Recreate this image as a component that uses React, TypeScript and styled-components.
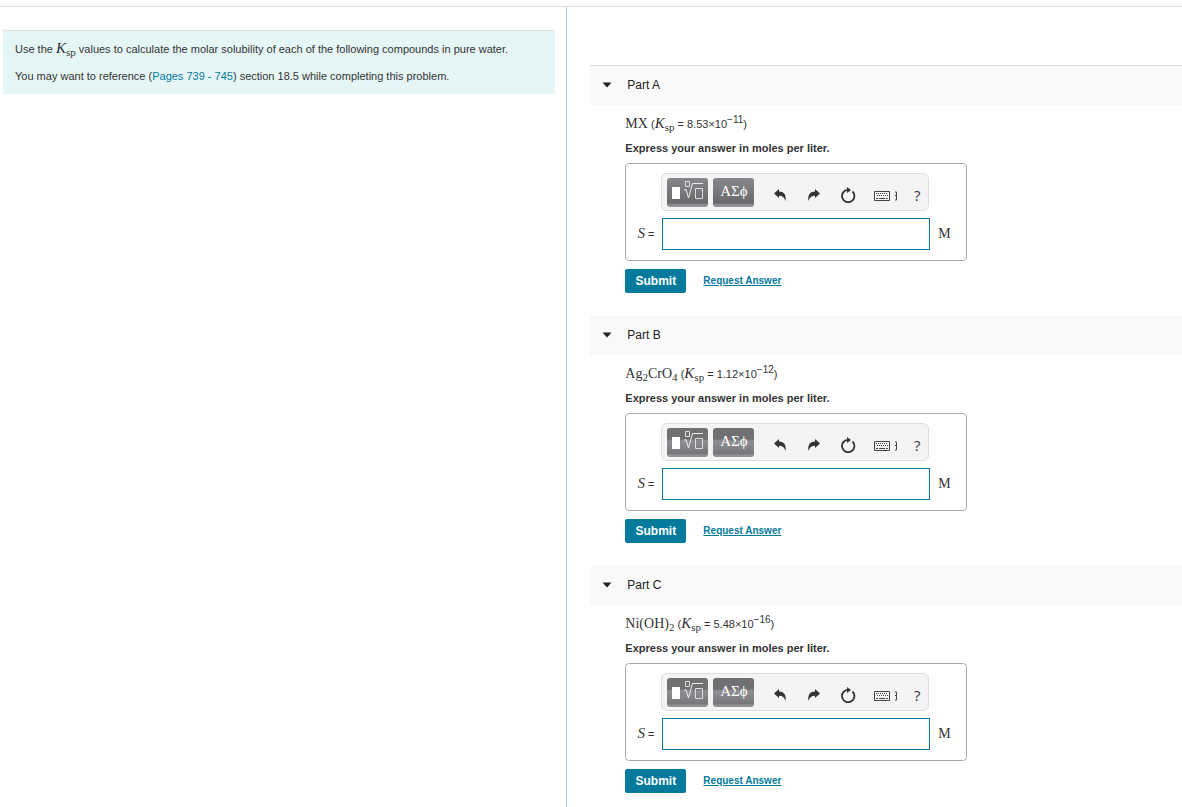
import React, { useState } from "react";
import styled, { createGlobalStyle } from "styled-components";

const Global = createGlobalStyle`
  *, *::before, *::after { box-sizing: border-box; }
  body {
    margin: 0;
    background: #fff;
    color: #333;
    font: 11px/16px "Liberation Sans", Arial, sans-serif;
  }
  button, input { font: inherit; color: inherit; }
`;

const teal = "#047a9c";

const Page = styled.div`
  display: flex;
  min-height: calc(100vh - 6px);
  margin-top: 6px;
  border-top: 1px solid #ddd;
`;

const Intro = styled.aside`
  flex: 0 0 48%;
  padding: 23px 11px 0 3px;
  border-right: 1px solid #b0c4d8;
`;

const IntroBox = styled.section`
  display: flex;
  flex-direction: column;
  gap: 11px;
  padding: 10px 12px;
  border-top: 1px solid #ddd;
  background: #e6f6f7;
`;

const Line = styled.p`
  margin: 0;
  font-size: 11px;
  line-height: 16px;
  white-space: nowrap;
`;

const PageLink = styled.a`
  color: ${teal};
  text-decoration: none;
`;

const Parts = styled.main`
  flex: 1;
  min-width: 0;
  padding: 58px 0 0 23px;
`;

const Part = styled.section`
  padding-bottom: 23px;
  &:first-child > h2 { border-top: 1px solid #ddd; }
`;

const PartHeading = styled.h2`
  margin: 0;
  background: #f9f9f9;
`;

const Toggle = styled.button`
  display: flex;
  align-items: center;
  gap: 15px;
  width: 100%;
  height: 39px;
  padding: 0 12px 2px;
  border: 0;
  background: none;
  font-size: 12px;
  font-weight: 400;
  color: #222;
  text-align: left;
`;

const Body = styled.div`
  padding: 11px 35px 0;
`;

const Math = styled.span<{ $italic?: boolean }>`
  font-family: "Liberation Serif", "Times New Roman", serif;
  font-size: ${(p) => (p.$italic ? 15 : 14)}px;
  line-height: 1;
  font-style: ${(p) => (p.$italic ? "italic" : "normal")};
`;

const Sub = styled.sub`
  font-family: "Liberation Serif", "Times New Roman", serif;
  font-size: 11px;
  line-height: 0;
  vertical-align: -3px;
`;

const Sup = styled.sup`
  font-size: 10px;
  line-height: 0;
  vertical-align: 5px;
`;

const Direction = styled.p`
  margin: 8px 0 7px;
  font-weight: 700;
  line-height: 16px;
`;

const AnswerBox = styled.div`
  display: grid;
  grid-template-columns: 28px 268px auto;
  column-gap: 8px;
  row-gap: 7px;
  align-items: center;
  width: 342px;
  max-width: 100%;
  padding: 9px 9px 10px 0;
  border: 1px solid #aaa;
  border-radius: 4px;
`;

const Toolbar = styled.div`
  grid-column: 2;
  display: flex;
  align-items: center;
  height: 38px;
  margin: 0 1px 0 -1px;
  padding: 0 5px;
  border: 1px solid #ddd;
  border-radius: 6px;
  background: #f4f4f4;
`;

const Palette = styled.button<{ $banded?: boolean }>`
  display: flex;
  align-items: center;
  justify-content: center;
  flex: 0 0 41px;
  height: 29px;
  margin-right: 5px;
  padding: 0 0 2px;
  border: 0;
  border-radius: 3px;
  background: ${(p) =>
    p.$banded
      ? "linear-gradient(#707073 0 11px, #8f8f93 13px, #77777a 26px, #939397 27px)"
      : "linear-gradient(#88888c, #6a6a6d 25px, #939397 27px)"};
  color: #fff;
  font-family: "Liberation Serif", "Times New Roman", serif;
  font-size: 15px;
`;

const Tools = styled.div`
  display: flex;
  flex: 1;
  padding-left: 4px;
`;

const Tool = styled.button<{ $wide?: boolean }>`
  display: flex;
  align-items: center;
  justify-content: center;
  flex: 0 0 ${(p) => (p.$wide ? 42 : 34)}px;
  height: 28px;
  padding: 5px 0 0;
  border: 0;
  background: none;
  color: #333;
`;

const Help = styled(Tool)`
  flex: 0 0 20px;
  font-family: "Open Sans", sans-serif;
  font-size: 15px;
`;

const Label = styled.label`
  grid-column: 1;
  text-align: right;
  white-space: nowrap;
`;

const Answer = styled.input`
  width: 100%;
  height: 32px;
  padding: 0 8px;
  border: 1px solid ${teal};
  border-radius: 0;
  background: #fff;
`;

const Actions = styled.div`
  display: flex;
  align-items: center;
  gap: 17px;
  margin-top: 8px;
`;

const Submit = styled.button`
  width: 61px;
  height: 24px;
  padding: 0;
  border: 0;
  border-radius: 2px;
  background: ${teal};
  color: #fff;
  font-size: 12px;
  font-weight: 700;
`;

const Request = styled.a`
  color: ${teal};
  font-size: 10px;
  font-weight: 700;
`;

const Ksp = () => (
  <>
    <Math $italic>K</Math>
    <Sub>sp</Sub>
  </>
);

const Caret = () => (
  <svg width="10" height="6" viewBox="0 0 10 6" aria-hidden="true">
    <path d="M0.5 0.5H9.5L5 5.5Z" fill="#222" />
  </svg>
);

const Templates = () => (
  <svg width="33" height="20" viewBox="0 0 33 20" fill="none" aria-hidden="true">
    <path d="M1 6H9V18H1Z" fill="#fff" />
    <path d="M14.500 0.500H18.500V5.500H14.500Z M24.500 7.500H31.500V17.500H24.500Z" stroke="#ddd" />
    <path d="M13 9.500L15 8.500L17.500 17L21.500 2.500H32" stroke="#eee" />
  </svg>
);

const Undo = () => (
  <svg width="14" height="14" viewBox="0 0 14 14" aria-hidden="true">
    <path d="M1 5.500L6 1V3.600C10.500 3.600 13.500 6.500 12.500 13C11.400 9.600 9.500 7.800 6 7.800V10Z" fill="#333" />
  </svg>
);

const Redo = () => (
  <svg width="14" height="14" viewBox="0 0 14 14" aria-hidden="true">
    <path d="M13 5.500L8 1V3.600C3.500 3.600 0.500 6.500 1.500 13C2.600 9.600 4.500 7.800 8 7.800V10Z" fill="#333" />
  </svg>
);

const Reset = () => (
  <svg width="16" height="16" viewBox="0 0 16 16" fill="none" aria-hidden="true">
    <path d="M12.500 4.500A6.200 6.200 0 1 1 8 2.800" stroke="#333" strokeWidth="1.800" />
    <path d="M7 0L11 3L7 6Z" fill="#333" />
  </svg>
);

const Keyboard = () => (
  <svg width="26" height="14" viewBox="0 0 26 14" fill="none" aria-hidden="true">
    <path d="M1.500 3.500H16.500V12.500H1.500Z" stroke="#444" />
    <path d="M3 5.500H15M4 7.500H15" stroke="#444" strokeDasharray="1 1" />
    <path d="M3 10.500H5M6 10.500H12M13 10.500H15" stroke="#444" />
    <path d="M22 4H23.500V12H22M22 7.500H24" stroke="#444" />
  </svg>
);

interface PartData {
  id: string;
  compound: React.ReactNode;
  mantissa: string;
  exponent: string;
}

const parts: PartData[] = [
  { id: "A", compound: "MX", mantissa: "8.53", exponent: "11" },
  { id: "B", compound: <>Ag<Sub>2</Sub>CrO<Sub>4</Sub></>, mantissa: "1.12", exponent: "12" },
  { id: "C", compound: <>Ni(OH)<Sub>2</Sub></>, mantissa: "5.48", exponent: "16" },
];

function PartSection({ id, compound, mantissa, exponent }: PartData) {
  const [open, setOpen] = useState(true);
  const banded = id !== "A";
  return (
    <Part>
      <PartHeading>
        <Toggle type="button" aria-expanded={open} onClick={() => setOpen(!open)}>
          <Caret />
          Part {id}
        </Toggle>
      </PartHeading>
      {open && (
        <Body>
          <Line>
            <Math>{compound}</Math> (<Ksp /> = {mantissa}×10<Sup>−{exponent}</Sup>)
          </Line>
          <Direction>Express your answer in moles per liter.</Direction>
          <AnswerBox>
            <Toolbar role="toolbar">
              <Palette type="button" aria-label="Templates" $banded={banded}><Templates /></Palette>
              <Palette type="button" $banded={banded}>ΑΣϕ</Palette>
              <Tools>
                <Tool type="button" aria-label="Undo"><Undo /></Tool>
                <Tool type="button" aria-label="Redo"><Redo /></Tool>
                <Tool type="button" aria-label="Reset"><Reset /></Tool>
                <Tool type="button" aria-label="Keyboard shortcuts" $wide><Keyboard /></Tool>
                <Help type="button">?</Help>
              </Tools>
            </Toolbar>
            <Label htmlFor={`answer-${id}`}><Math $italic>S</Math> =</Label>
            <Answer id={`answer-${id}`} type="text" />
            <Math>M</Math>
          </AnswerBox>
          <Actions>
            <Submit type="button">Submit</Submit>
            <Request href="#">Request Answer</Request>
          </Actions>
        </Body>
      )}
    </Part>
  );
}

export default function App() {
  return (
    <>
      <Global />
      <Page>
        <Intro>
          <IntroBox>
            <Line>
              Use the <Ksp /> values to calculate the molar solubility of each of the following compounds in pure water.
            </Line>
            <Line>
              You may want to reference (<PageLink href="#">Pages 739 - 745</PageLink>) section 18.5 while completing this problem.
            </Line>
          </IntroBox>
        </Intro>
        <Parts>
          {parts.map((part) => (
            <PartSection key={part.id} {...part} />
          ))}
        </Parts>
      </Page>
    </>
  );
}
